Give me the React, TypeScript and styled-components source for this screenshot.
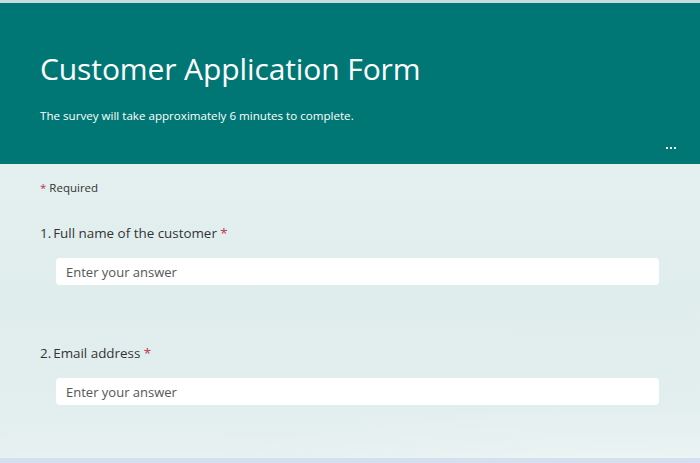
import styled, { createGlobalStyle } from 'styled-components';

const GlobalStyle = createGlobalStyle`
  html, body {
    margin: 0;
    padding: 0;
    height: 100%;
    overflow: hidden;
  }
  body {
    font-family: "Open Sans", "Noto Sans", sans-serif;
    background: #d4e0f0;
  }
`;

const questions = [
  { id: 1, title: 'Full name of the customer' },
  { id: 2, title: 'Email address' },
];

const App = () => {
  return (
    <Page>
      <GlobalStyle />
      <TopStrip />
      <Header>
        <Title>Customer Application Form</Title>
        <Subtitle>The survey will take approximately 6 minutes to complete.</Subtitle>
        <MoreButton aria-label="more">
          <Dot />
          <Dot />
          <Dot />
        </MoreButton>
      </Header>
      <Body>
        <RequiredNote>
          <Star>*</Star> Required
        </RequiredNote>
        {questions.map((q) => (
          <Question key={q.id}>
            <QuestionTitle>
              <Number>{q.id}.</Number>
              {q.title} <Star>*</Star>
            </QuestionTitle>
            <AnswerInput placeholder="Enter your answer" />
          </Question>
        ))}
      </Body>
      <BottomStrip />
    </Page>
  );
};

export default App;

const Page = styled.div`
  width: 700px;
  height: 463px;
  display: flex;
  flex-direction: column;
  overflow: hidden;
`;

const TopStrip = styled.div`
  height: 3px;
  background: #c7dcdc;
`;

const Header = styled.div`
  position: relative;
  height: 161px;
  background: #007775;
  padding: 0 40px;
  box-sizing: border-box;
  color: #fff;
  display: flex;
  flex-direction: column;
`;

const Title = styled.h1`
  margin: 46px 0 0;
  font-size: 30px;
  font-weight: 400;
  line-height: 40px;
  letter-spacing: -0.1px;
`;

const Subtitle = styled.p`
  margin: 19px 0 0;
  font-size: 11.6px;
  line-height: 16px;
`;

const MoreButton = styled.div`
  position: absolute;
  right: 24px;
  bottom: 15px;
  display: flex;
  gap: 2px;
`;

const Dot = styled.span`
  width: 2px;
  height: 2px;
  background: #fff;
`;

const Body = styled.div`
  flex: 1;
  background:
    radial-gradient(ellipse 420px 60px at 620px 300px, rgba(255, 255, 255, 0.3), transparent),
    radial-gradient(ellipse 500px 70px at 120px 330px, rgba(255, 255, 255, 0.25), transparent),
    linear-gradient(180deg, #e4f0f0 0%, #e0eded 45%, #e4efef 100%);
  padding: 15px 40px 0;
  display: flex;
  flex-direction: column;
`;

const RequiredNote = styled.div`
  font-size: 11.5px;
  line-height: 18px;
  color: #333;
`;

const Star = styled.span`
  color: #c4314b;
`;

const Question = styled.div`
  display: flex;
  flex-direction: column;
  margin-top: 26px;

  & + & {
    margin-top: 58px;
  }
`;

const QuestionTitle = styled.div`
  font-size: 13.4px;
  line-height: 20px;
  color: #333;
`;

const Number = styled.span`
  margin-right: 2px;
`;

const AnswerInput = styled.input`
  margin: 15px 0 0 16px;
  width: 603px;
  height: 27px;
  box-sizing: border-box;
  border: none;
  border-radius: 4px;
  background: #fff;
  padding: 0 10px;
  font-family: inherit;
  font-size: 13px;
  color: #333;
  outline: none;

  &::placeholder {
    color: #555;
  }
`;

const BottomStrip = styled.div`
  height: 5px;
  background: #d4e0f0;
`;
